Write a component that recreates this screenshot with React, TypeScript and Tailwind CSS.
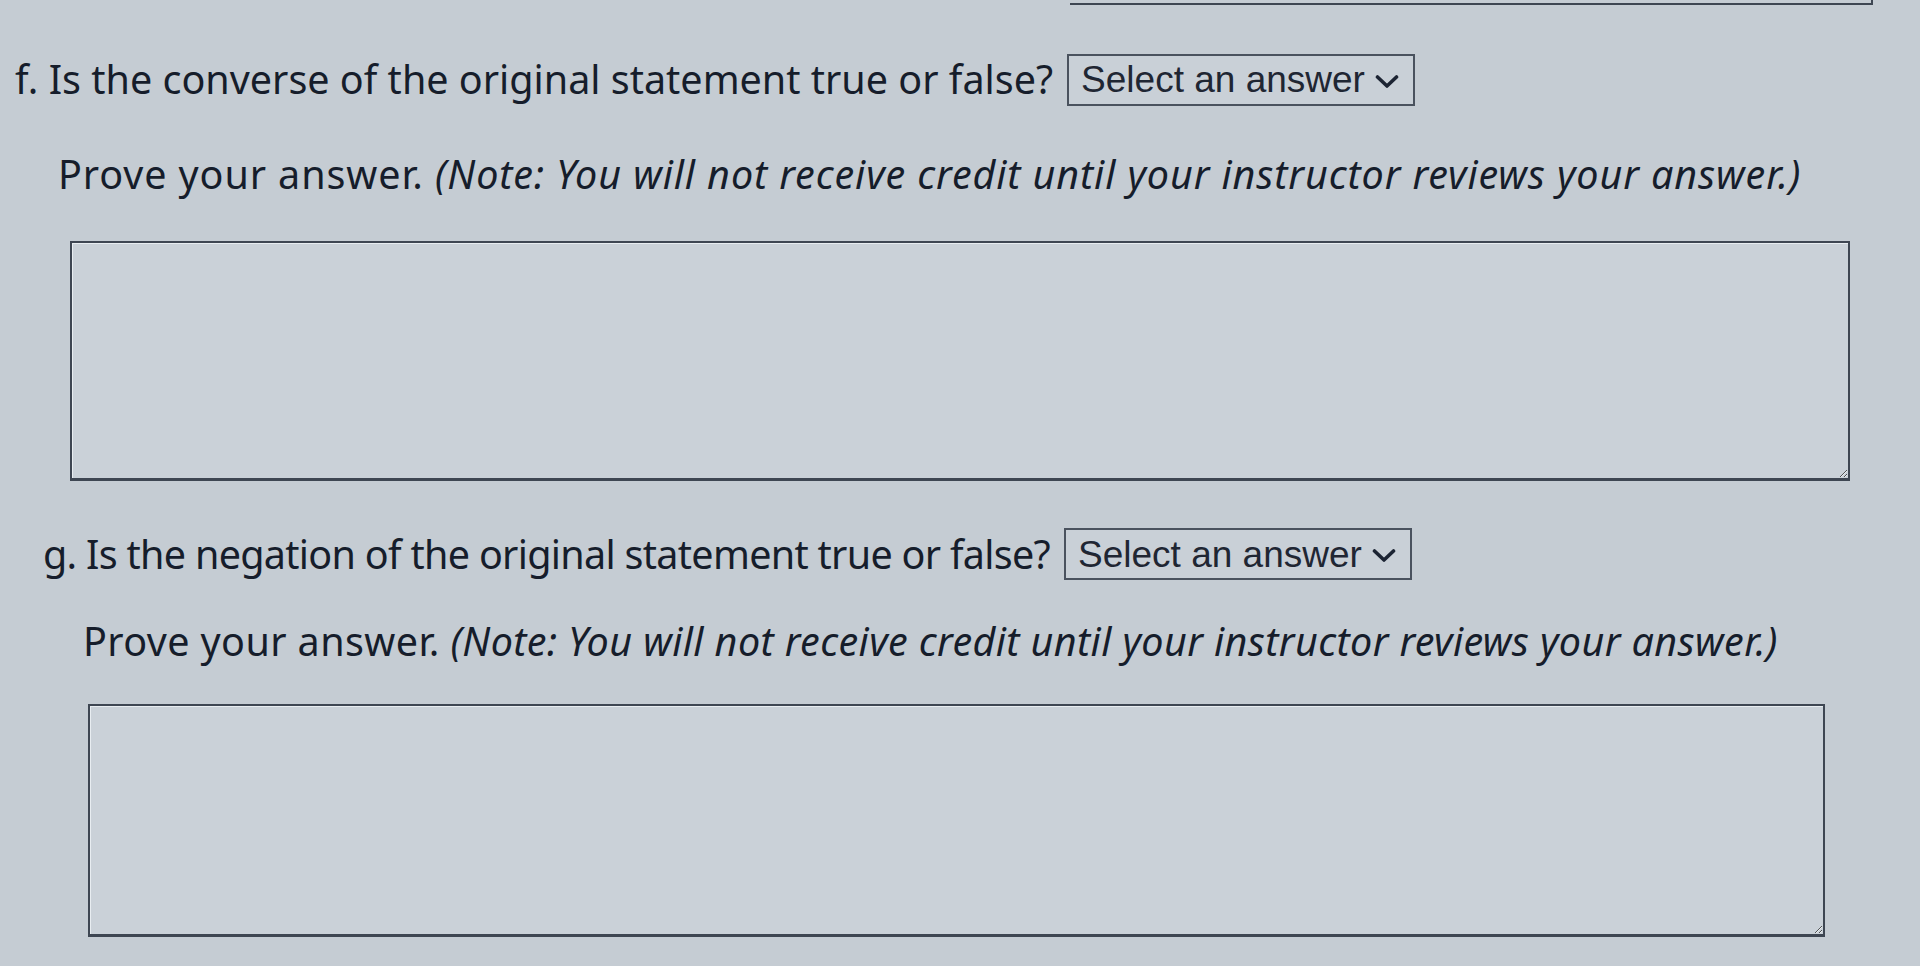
const NOTE = "You will not receive credit until your instructor reviews your answer."

const Caret = () => (
    <svg width="24" height="16" viewBox="0 0 24 16" className="ml-[10px] mt-[4px] shrink-0" aria-hidden="true">
        <polyline points="2.5,3 12,12 21.5,3" fill="none" stroke="#1c2433" strokeWidth="3.6" strokeLinecap="round" strokeLinejoin="round" />
    </svg>
)

const AnswerSelect = () => (
    <div className="flex h-[52px] items-center border-2 border-[#4a525e] bg-[#c9d0d7] pl-[12px] pr-[14px] font-['Liberation_Sans',Arial,sans-serif] text-[37px] leading-none tracking-normal text-[#1f2633]">
        <span>Select an answer</span>
        <Caret />
    </div>
)

const Question = ({
    label,
    text,
    className,
}: {
    label: string
    text: string
    className: string
}) => (
    <div className={`flex items-center ${className}`}>
        <span className="mr-[14px]">
            {label} {text}
        </span>
        <AnswerSelect />
    </div>
)

const Prove = ({ className }: { className: string }) => (
    <p className={`leading-none ${className}`}>
        Prove your answer. <i>(Note: {NOTE})</i>
    </p>
)

export default function App() {
    return (
        <div className="h-[966px] w-full overflow-hidden bg-[#c5ccd3] font-['Noto_Sans',sans-serif] text-[39.5px] text-[#161d2b]">
            <div className="ml-[1070px] h-[5px] w-[803px] border-b-2 border-r-2 border-[#3e4652]" />

            <Question
                label="f."
                text="Is the converse of the original statement true or false?"
                className="ml-[15px] mt-[45px]"
            />
            <Prove className="ml-[58px] mt-[46px] tracking-[0.9px]" />
            <textarea
                className="ml-[70px] mt-[46px] block h-[240px] w-[1780px] resize border-2 border-b-[3px] border-[#3e4652] bg-[#cad1d8] shadow-[inset_1px_1px_0_#e8edf1]"
                aria-label="Answer f"
            />

            <Question
                label="g."
                text="Is the negation of the original statement true or false?"
                className="ml-[43px] mt-[44px] tracking-[-0.7px]"
            />
            <Prove className="ml-[83px] mt-[38px] tracking-[0.4px]" />
            <textarea
                className="ml-[88px] mt-[42px] block h-[233px] w-[1737px] resize border-2 border-b-[3px] border-[#3e4652] bg-[#cad1d8] shadow-[inset_1px_1px_0_#e8edf1]"
                aria-label="Answer g"
            />
        </div>
    )
}
